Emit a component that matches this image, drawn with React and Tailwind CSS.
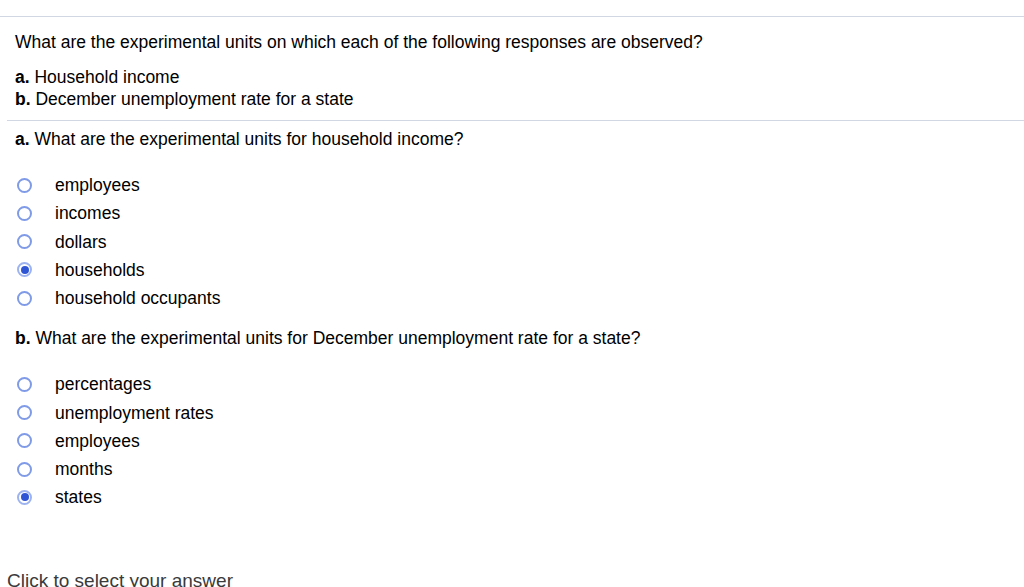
import React from "react";

function Radio({ checked }) {
  return (
    <span
      className={
        "ml-[2px] flex h-[15px] w-[15px] shrink-0 items-center justify-center rounded-full border-2 bg-white " +
        (checked ? "border-[#9db3ef]" : "border-[#7f9be8]")
      }
    >
      {checked && <span className="h-[8px] w-[8px] rounded-full bg-[#2f55d4]" />}
    </span>
  );
}

function Option({ label, checked }) {
  return (
    <div className="flex h-[28.25px] items-center">
      <Radio checked={checked} />
      <span className="ml-[23px] leading-[22px]">{label}</span>
    </div>
  );
}

export default function App() {
  const partA = ["employees", "incomes", "dollars", "households", "household occupants"];
  const partB = ["percentages", "unemployment rates", "employees", "months", "states"];
  return (
    <div className="h-[587px] w-[1024px] overflow-hidden bg-white font-['Liberation_Sans',Arial,sans-serif] text-[17.5px] text-black">
      <div className="h-4" />
      <div className="border-t border-[#d2d8e3]">
        <div className="pl-[15px] pt-[14px]">
          <p className="leading-[22px]">
            What are the experimental units on which each of the following responses are observed?
          </p>
          <div className="mt-[13px] mb-[10px]">
            <p className="leading-[22px]">
              <b>a.</b> Household income
            </p>
            <p className="leading-[22px]">
              <b>b.</b> December unemployment rate for a state
            </p>
          </div>
        </div>
        <div className="ml-[7px] border-t border-[#d2d8e3]">
          <div className="pl-[8px] pt-[7px]">
            <p className="leading-[22px]">
              <b>a.</b> What are the experimental units for household income?
            </p>
            <div className="mt-[21px]">
              {partA.map((o) => (
                <Option key={o} label={o} checked={o === "households"} />
              ))}
            </div>
            <p className="mt-[15px] leading-[22px]">
              <b>b.</b> What are the experimental units for December unemployment rate for a state?
            </p>
            <div className="mt-[21px]">
              {partB.map((o) => (
                <Option key={o} label={o} checked={o === "states"} />
              ))}
            </div>
          </div>
          <p className="mt-[58px] text-[19px] leading-[22px] text-[#3a3a3a]">Click to select your answer</p>
        </div>
      </div>
    </div>
  );
}
